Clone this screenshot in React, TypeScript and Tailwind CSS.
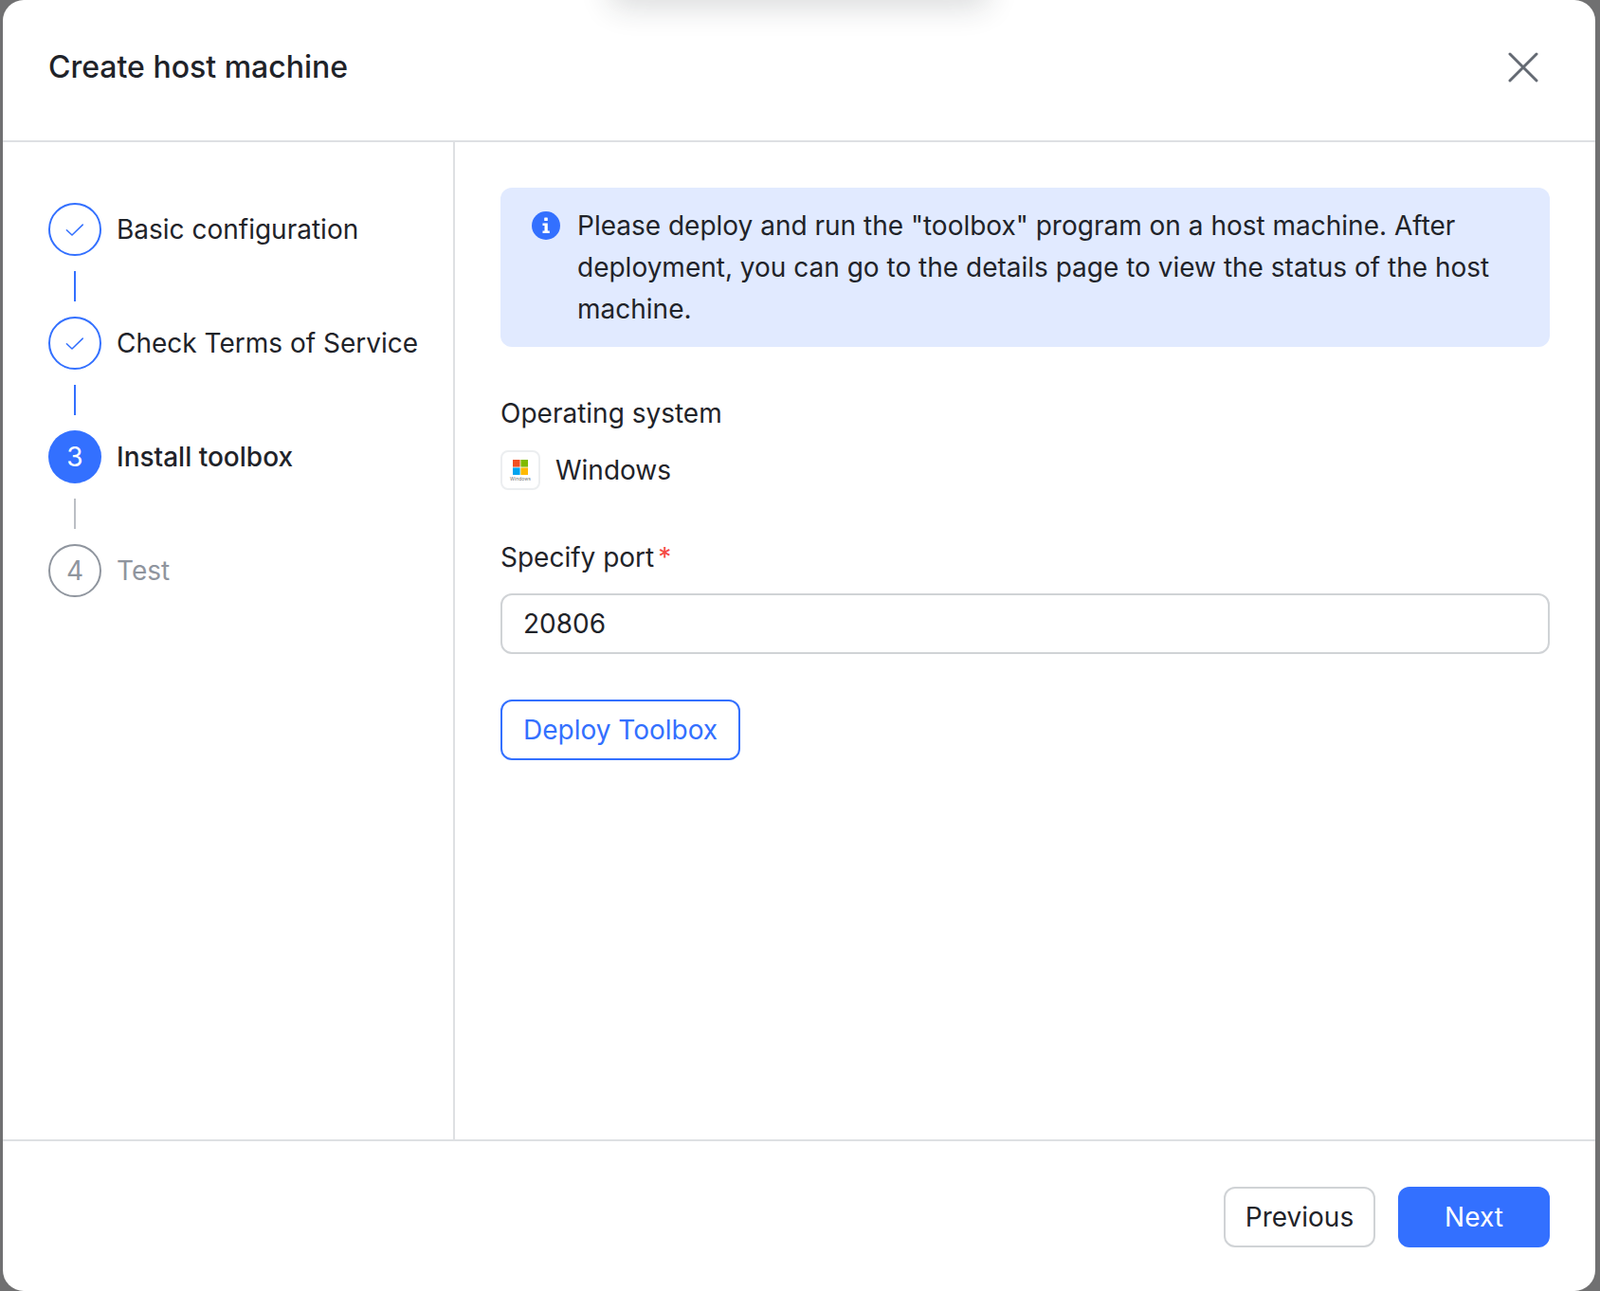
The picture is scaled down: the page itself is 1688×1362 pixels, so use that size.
const steps = [
  { label: "Basic configuration", state: "done" },
  { label: "Check Terms of Service", state: "done" },
  { label: "Install toolbox", state: "active" },
  { label: "Test", state: "todo" },
];

const Check = () => (
  <svg width="28" height="28" viewBox="0 0 28 28" fill="none">
    <path d="M2.5 15 L10 22 L25 7.5" stroke="#3370ff" strokeWidth="2" strokeLinecap="round" strokeLinejoin="round" transform="translate(3.5 3.5) scale(0.75)" />
  </svg>
);

const StepItem = ({ step, index }: { step: (typeof steps)[number]; index: number }) => {
  return (
    <div className="flex flex-col">
      <div className="flex items-center gap-4">
        {step.state === "done" && (
          <div className="w-14 h-14 rounded-full border-2 border-[#3370ff] flex items-center justify-center">
            <Check />
          </div>
        )}
        {step.state === "active" && (
          <div className="w-14 h-14 rounded-full bg-[#3370ff] text-white text-[28px] flex items-center justify-center">
            {index + 1}
          </div>
        )}
        {step.state === "todo" && (
          <div className="w-14 h-14 rounded-full border-2 border-[#8f959e] text-[#8f959e] text-[28px] flex items-center justify-center">
            {index + 1}
          </div>
        )}
        <span
          className={
            step.state === "todo"
              ? "text-[#8f959e]"
              : step.state === "active"
                ? "font-medium"
                : ""
          }
        >
          {step.label}
        </span>
      </div>
      {index < steps.length - 1 && (
        <div className={`ml-[27px] w-0.5 h-8 my-4 ${step.state === "active" ? "bg-[#bbbfc4]" : "bg-[#3370ff]"}`} />
      )}
    </div>
  );
};

const App = () => {
  return (
    <div className="w-[1688px] h-[1362px] bg-[#707071] pl-[3px] pr-[5px] overflow-hidden">
      <div
        className="relative h-full bg-white rounded-[22px] flex flex-col overflow-hidden text-[#1f2329] text-[28px] leading-[44px]"
        style={{ fontFamily: "Inter, 'Noto Sans', sans-serif" }}
      >
        {/* shadow of the toast above the dialog */}
        <div className="absolute left-[640px] top-[-60px] w-[400px] h-[60px] rounded-xl shadow-[0_8px_32px_rgba(31,35,41,0.16)]" />

        <header className="h-[150px] shrink-0 flex items-center justify-between pl-12 pr-[60px] pb-[6px] border-b-2 border-[#dee0e3]">
          <h1 className="text-[32px] font-medium">Create host machine</h1>
          <svg width="32" height="32" viewBox="0 0 32 32" fill="none">
            <path d="M2 2 L30 30 M30 2 L2 30" stroke="#646a73" strokeWidth="3" strokeLinecap="round" />
          </svg>
        </header>

        <div className="flex-1 flex min-h-0">
          <aside className="w-[477px] shrink-0 border-r-2 border-[#dee0e3] pl-12 pt-16">
            {steps.map((step, i) => (
              <StepItem key={step.label} step={step} index={i} />
            ))}
          </aside>

          <main className="flex-1 p-12">
            <div className="bg-[#e1eaff] rounded-xl pl-[33px] pr-8 py-[18px] flex gap-[18px]">
              <svg className="shrink-0 mt-[7px]" width="30" height="30" viewBox="0 0 30 30">
                <circle cx="15" cy="15" r="15" fill="#3370ff" />
                <rect x="13.2" y="6.5" width="3.6" height="3.6" fill="#fff" rx="0.6" />
                <path d="M11.5 12.5 H16.8 V20.5 H18.8 V23 H11.5 V20.5 H13.5 V15 H11.5 Z" fill="#fff" />
              </svg>
              <p>
                Please deploy and run the "toolbox" program on a host machine. After deployment, you can go to the details page to view the status of the host machine.
              </p>
            </div>

            <div className="mt-[48px]">Operating system</div>
            <div className="mt-[16px] flex items-center gap-4">
              <div className="w-[42px] h-[42px] border-2 border-[#eceef0] rounded-lg flex flex-col items-center pt-[8px]">
                <svg width="16" height="16" viewBox="0 0 16 16" className="shrink-0">
                  <rect width="7.6" height="7.6" fill="#f25022" />
                  <rect x="8.4" width="7.6" height="7.6" fill="#7fba00" />
                  <rect y="8.4" width="7.6" height="7.6" fill="#00a4ef" />
                  <rect x="8.4" y="8.4" width="7.6" height="7.6" fill="#ffb900" />
                </svg>
                <span className="text-[5px] leading-[7px] mt-px text-[#737373]">Windows</span>
              </div>
              <span>Windows</span>
            </div>

            <div className="mt-[48px]">
              Specify port<span className="text-[#f54a45] ml-1">*</span>
            </div>
            <input
              readOnly
              value="20806"
              className="mt-[16px] w-full h-16 border-2 border-[#d0d3d6] rounded-xl px-[22px] outline-none block"
            />

            <button className="mt-12 h-16 px-[22px] border-2 border-[#3370ff] text-[#3370ff] rounded-xl block">
              Deploy Toolbox
            </button>
          </main>
        </div>

        <footer className="h-[160px] shrink-0 border-t-2 border-[#dee0e3] flex justify-end items-start gap-6 pt-12 pr-12">
          <button className="h-16 w-40 border-2 border-[#d0d3d6] rounded-xl">Previous</button>
          <button className="h-16 w-40 bg-[#3370ff] text-white rounded-xl">Next</button>
        </footer>
      </div>
    </div>
  );
};

export default App;
